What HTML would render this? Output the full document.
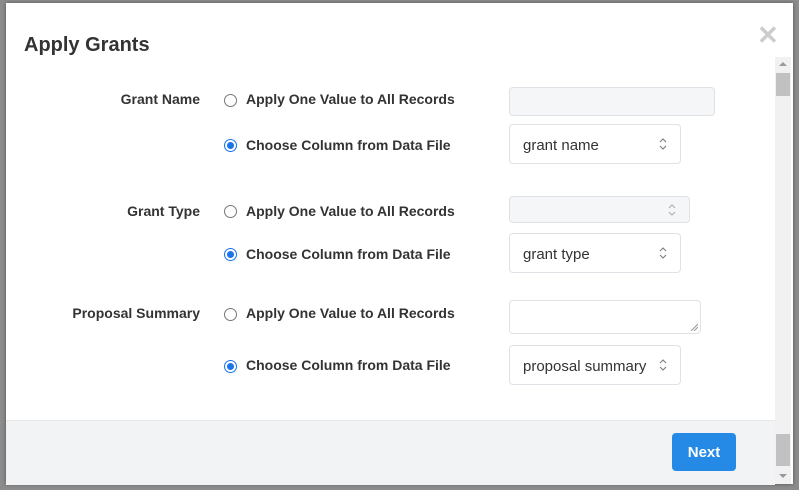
<!DOCTYPE html>
<html><head><style>
body{margin:0;width:799px;height:490px;background:#8c8c8c;position:relative;overflow:hidden;font-family:"Liberation Sans",sans-serif;color:#333;}
.a{position:absolute}
.modal{left:6px;top:3px;width:787px;height:481px;background:#fff;box-shadow:0 0 4px rgba(0,0,0,.4)}
.lbl{font-size:14px;font-weight:bold;color:#333;text-align:right;width:200px;left:0}
.opt{font-size:14px;font-weight:bold;color:#333;left:246px}
.r{width:11px;height:11px;border:1px solid #777;border-radius:50%;left:224px;background:#fff}
.r.on{border-color:#1a73e8;}
.r.on::after{content:"";position:absolute;left:2px;top:2px;width:7px;height:7px;border-radius:50%;background:#1a73e8}
.inp{border:1px solid #dfe2e6;border-radius:4px;left:509px;box-sizing:border-box}
.sel{font-size:15px;color:#333;padding-left:13px;line-height:42px}
.chev{position:absolute;right:13px;top:13px;width:8px;height:12px}
</style></head><body>
<div class="a modal"></div>
<div class="a" style="left:24px;top:34px;font-size:20px;font-weight:bold;color:#333">Apply Grants</div>
<div class="a" style="left:757px;top:22px;font-size:26px;color:#ccc;font-weight:bold;line-height:26px">✕</div>
<div class="a" style="left:775px;top:57px;width:16px;height:427px;background:#f1f1f1"></div>
<div class="a" style="left:776px;top:73px;width:14px;height:23px;background:#c1c1c1"></div>
<div class="a" style="left:776px;top:434px;width:14px;height:32px;background:#c1c1c1"></div>
<div class="a" style="left:779px;top:62px;border:4px solid transparent;border-bottom:4px solid #999;border-top:0"></div>
<div class="a" style="left:779px;top:474px;border:4px solid transparent;border-top:4px solid #999;border-bottom:0"></div>
<div class="a" style="left:6px;top:420px;width:769px;height:64px;background:#f2f3f5;border-top:1px solid #e6e7ea"></div>
<div class="a" style="left:672px;top:433px;width:64px;height:38px;background:#2589e6;border-radius:4px;color:#fff;font-weight:bold;font-size:15px;text-align:center;line-height:40px">Next</div>

<div class="a lbl" style="top:91px">Grant Name</div>
<div class="a r" style="top:94px"></div><div class="a opt" style="top:91px">Apply One Value to All Records</div>
<div class="a r on" style="top:139px"></div><div class="a opt" style="top:137px">Choose Column from Data File</div>
<div class="a inp" style="top:87px;width:206px;height:29px;background:#f5f6f8"></div>
<div class="a inp sel" style="top:124px;width:172px;height:40px">grant name<svg class="chev" viewBox="0 0 8 12"><path d="M1 4L4 1L7 4M1 8L4 11L7 8" fill="none" stroke="#777" stroke-width="1"/></svg></div>

<div class="a lbl" style="top:203px">Grant Type</div>
<div class="a r" style="top:205px"></div><div class="a opt" style="top:203px">Apply One Value to All Records</div>
<div class="a r on" style="top:248px"></div><div class="a opt" style="top:246px">Choose Column from Data File</div>
<div class="a inp" style="top:196px;width:181px;height:27px;background:#f5f6f8"><svg class="chev" style="top:7px" viewBox="0 0 8 12"><path d="M1 4L4 1L7 4M1 8L4 11L7 8" fill="none" stroke="#aaa" stroke-width="1"/></svg></div>
<div class="a inp sel" style="top:233px;width:172px;height:40px">grant type<svg class="chev" viewBox="0 0 8 12"><path d="M1 4L4 1L7 4M1 8L4 11L7 8" fill="none" stroke="#777" stroke-width="1"/></svg></div>

<div class="a lbl" style="top:305px">Proposal Summary</div>
<div class="a r" style="top:308px"></div><div class="a opt" style="top:305px">Apply One Value to All Records</div>
<div class="a r on" style="top:360px"></div><div class="a opt" style="top:357px">Choose Column from Data File</div>
<div class="a inp" style="top:300px;width:192px;height:34px"><svg style="position:absolute;right:2px;bottom:2px" width="8" height="8"><path d="M1 8L8 1M4 8L8 4" stroke="#999"/></svg></div>
<div class="a inp sel" style="top:345px;width:172px;height:40px">proposal summary<svg class="chev" viewBox="0 0 8 12"><path d="M1 4L4 1L7 4M1 8L4 11L7 8" fill="none" stroke="#777" stroke-width="1"/></svg></div>
</body></html>
